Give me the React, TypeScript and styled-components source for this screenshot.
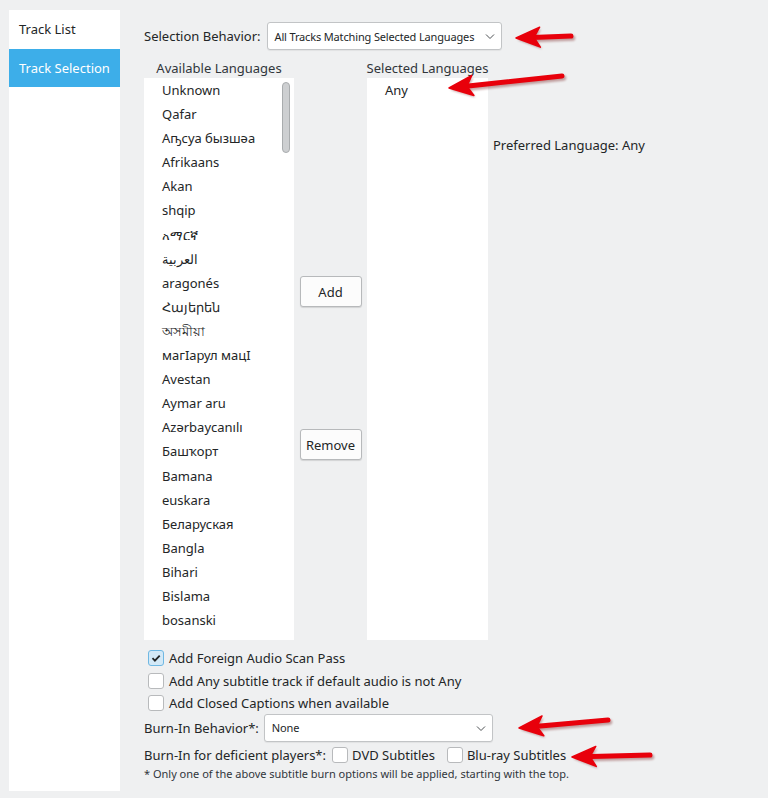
import React from "react";
import styled, { createGlobalStyle } from "styled-components";

const GlobalStyle = createGlobalStyle`
  html, body {
    margin: 0;
    padding: 0;
    background: #eff0f1;
  }
  body {
    font-family: "Noto Sans", "Open Sans", sans-serif;
    font-size: 13px;
    color: #232627;
  }
`;

const Page = styled.div`
  position: relative;
  display: flex;
  width: 768px;
  height: 798px;
  box-sizing: border-box;
  padding: 10px 0 7px 9px;
  overflow: hidden;
`;

const Sidebar = styled.div`
  width: 111px;
  background: #ffffff;
  display: flex;
  flex-direction: column;
  gap: 1px;
`;

const SideItem = styled.div<{ $active?: boolean }>`
  height: 38px;
  display: flex;
  align-items: center;
  padding-left: 10px;
  background: ${(p) => (p.$active ? "#3daee9" : "transparent")};
  color: ${(p) => (p.$active ? "#ffffff" : "#232627")};
`;

const Main = styled.div`
  margin-left: 24px;
  padding-top: 12px;
  display: flex;
  flex-direction: column;
  flex: 1;
`;

const FormRow = styled.div`
  display: flex;
  align-items: center;
  gap: 6px;
`;

const Combo = styled.div<{ $width: number }>`
  width: ${(p) => p.$width}px;
  height: 28px;
  box-sizing: border-box;
  background: #ffffff;
  border: 1px solid #c2c4c6;
  border-radius: 3px;
  box-shadow: 0 1px 1px rgba(0, 0, 0, 0.06);
  display: flex;
  align-items: center;
  justify-content: space-between;
  padding: 0 5px 0 7px;
  font-size: 11px;
  color: #232627;
  white-space: nowrap;
  span {
    letter-spacing: -0.15px;
  }
  svg {
    width: 12px;
    height: 12px;
    color: #4d5154;
    flex-shrink: 0;
  }
`;

const ListsArea = styled.div`
  display: flex;
  margin-top: 9px;
`;

const ListColumn = styled.div<{ $width: number }>`
  width: ${(p) => p.$width}px;
  display: flex;
  flex-direction: column;
`;

const ListHeader = styled.div`
  height: 19px;
  display: flex;
  justify-content: center;
  line-height: 19px;
  white-space: nowrap;
  color: #31363b;
`;

const ListBox = styled.div`
  position: relative;
  height: 562px;
  background: #ffffff;
  overflow: hidden;
`;

const ListItem = styled.div`
  height: 24.1px;
  line-height: 24.1px;
  padding-left: 18px;
  white-space: nowrap;
`;

const ScrollThumb = styled.div`
  position: absolute;
  right: 4px;
  top: 4px;
  width: 6px;
  height: 69px;
  border-radius: 4px;
  background: #cdcfd1;
  border: 1px solid #a9acae;
`;

const ButtonColumn = styled.div`
  width: 73px;
  display: flex;
  flex-direction: column;
  align-items: center;
  padding-top: 217px;
  gap: 122px;
`;

const PushButton = styled.div`
  width: 62px;
  height: 31px;
  box-sizing: border-box;
  background: #fcfcfc;
  border: 1px solid #b7b9bb;
  border-radius: 3px;
  box-shadow: 0 1px 1px rgba(0, 0, 0, 0.12);
  display: flex;
  align-items: center;
  justify-content: center;
`;

const Preferred = styled.div`
  margin-left: 5px;
  padding-top: 77px;
  white-space: nowrap;
`;

const Options = styled.div`
  display: flex;
  flex-direction: column;
  margin-top: 7px;
`;

const CheckRow = styled.label`
  height: 22.5px;
  display: flex;
  align-items: center;
  gap: 5px;
  padding-left: 4px;
`;

const Box = styled.span<{ $checked?: boolean }>`
  width: 16px;
  height: 16px;
  box-sizing: border-box;
  border-radius: 3px;
  border: 1px solid ${(p) => (p.$checked ? "#6fb8e3" : "#b8babc")};
  background: ${(p) => (p.$checked ? "#d3e9f7" : "#ffffff")};
  display: flex;
  align-items: center;
  justify-content: center;
  flex-shrink: 0;
  svg {
    width: 12px;
    height: 12px;
  }
`;

const BurnRow = styled(FormRow)`
  margin-top: -1px;
  gap: 5px;
`;

const DeficientRow = styled.div`
  display: flex;
  align-items: center;
  height: 26px;
`;

const InlineCheck = styled.span`
  display: flex;
  align-items: center;
  gap: 4px;
  margin-left: 6px;
  margin-right: 6px;
`;

const Note = styled.div`
  font-size: 11px;
  color: #31363b;
  margin-top: -2px;
`;

const Overlay = styled.svg`
  position: absolute;
  left: 0;
  top: 0;
  width: 768px;
  height: 798px;
  pointer-events: none;
`;

const languages = [
  "Unknown",
  "Qafar",
  "Аҧсуа бызшәа",
  "Afrikaans",
  "Akan",
  "shqip",
  "አማርኛ",
  "العربية",
  "aragonés",
  "Հայերեն",
  "অসমীয়া",
  "магӀарул мацӀ",
  "Avestan",
  "Aymar aru",
  "Azərbaycanılı",
  "Башҡорт",
  "Bamana",
  "euskara",
  "Беларуская",
  "Bangla",
  "Bihari",
  "Bislama",
  "bosanski",
];

const Chevron = () => (
  <svg viewBox="0 0 12 12" fill="none" stroke="currentColor" strokeWidth="1">
    <path d="M2 4.5l4 4 4-4" />
  </svg>
);

const Check = () => (
  <svg viewBox="0 0 12 12" fill="none" stroke="#232627" strokeWidth="1.8">
    <path d="M2.5 6.2l2.4 2.4 4.8-5" />
  </svg>
);

function Arrow({ tip, tail }: { tip: [number, number]; tail: [number, number] }) {
  const [tx, ty] = tip;
  const [ex, ey] = tail;
  const dx = ex - tx;
  const dy = ey - ty;
  const len = Math.hypot(dx, dy);
  const ux = dx / len;
  const uy = dy / len;
  const hl = 24;
  const hw = 10;
  const bx = tx + ux * hl;
  const by = ty + uy * hl;
  const head = `${tx},${ty} ${bx - uy * hw},${by + ux * hw} ${tx + ux * (hl - 6)},${ty + uy * (hl - 6)} ${bx + uy * hw},${by - ux * hw}`;
  return (
    <g>
      <g transform="translate(1.5,2)" opacity="0.35" filter="url(#blur)">
        <line x1={tx + ux * 10} y1={ty + uy * 10} x2={ex} y2={ey} stroke="#600" strokeWidth="5.5" strokeLinecap="round" />
        <polygon points={head} fill="#600" />
      </g>
      <line x1={tx + ux * 10} y1={ty + uy * 10} x2={ex} y2={ey} stroke="#e8000b" strokeWidth="5" strokeLinecap="round" />
      <polygon points={head} fill="#e8000b" strokeLinejoin="round" stroke="#e8000b" strokeWidth="1.5" />
    </g>
  );
}

export default function App() {
  return (
    <>
      <GlobalStyle />
      <Page>
        <Sidebar>
          <SideItem>Track List</SideItem>
          <SideItem $active>Track Selection</SideItem>
        </Sidebar>
        <Main>
          <FormRow>
            <span>Selection Behavior:</span>
            <Combo $width={235}>
              <span>All Tracks Matching Selected Languages</span>
              <Chevron />
            </Combo>
          </FormRow>

          <ListsArea>
            <ListColumn $width={150}>
              <ListHeader>Available Languages</ListHeader>
              <ListBox>
                {languages.map((l) => (
                  <ListItem key={l}>{l}</ListItem>
                ))}
                <ScrollThumb />
              </ListBox>
            </ListColumn>
            <ButtonColumn>
              <PushButton>Add</PushButton>
              <PushButton>Remove</PushButton>
            </ButtonColumn>
            <ListColumn $width={121}>
              <ListHeader>Selected Languages</ListHeader>
              <ListBox>
                <ListItem>Any</ListItem>
              </ListBox>
            </ListColumn>
            <Preferred>Preferred Language: Any</Preferred>
          </ListsArea>

          <Options>
            <CheckRow>
              <Box $checked>
                <Check />
              </Box>
              Add Foreign Audio Scan Pass
            </CheckRow>
            <CheckRow>
              <Box />
              Add Any subtitle track if default audio is not Any
            </CheckRow>
            <CheckRow>
              <Box />
              Add Closed Captions when available
            </CheckRow>
          </Options>

          <BurnRow>
            <span>Burn-In Behavior*:</span>
            <Combo $width={229}>
              <span>None</span>
              <Chevron />
            </Combo>
          </BurnRow>

          <DeficientRow>
            <span>Burn-In for deficient players*:</span>
            <InlineCheck>
              <Box />
              DVD Subtitles
            </InlineCheck>
            <InlineCheck>
              <Box />
              Blu-ray Subtitles
            </InlineCheck>
          </DeficientRow>

          <Note>* Only one of the above subtitle burn options will be applied, starting with the top.</Note>
        </Main>

        <Overlay viewBox="0 0 768 798">
          <defs>
            <filter id="blur" x="-20%" y="-50%" width="140%" height="200%">
              <feGaussianBlur stdDeviation="1.2" />
            </filter>
          </defs>
          <Arrow tip={[516, 38]} tail={[571, 36]} />
          <Arrow tip={[449, 88]} tail={[562, 76]} />
          <Arrow tip={[519, 728]} tail={[608, 720]} />
          <Arrow tip={[572, 757]} tail={[650, 755]} />
        </Overlay>
      </Page>
    </>
  );
}
